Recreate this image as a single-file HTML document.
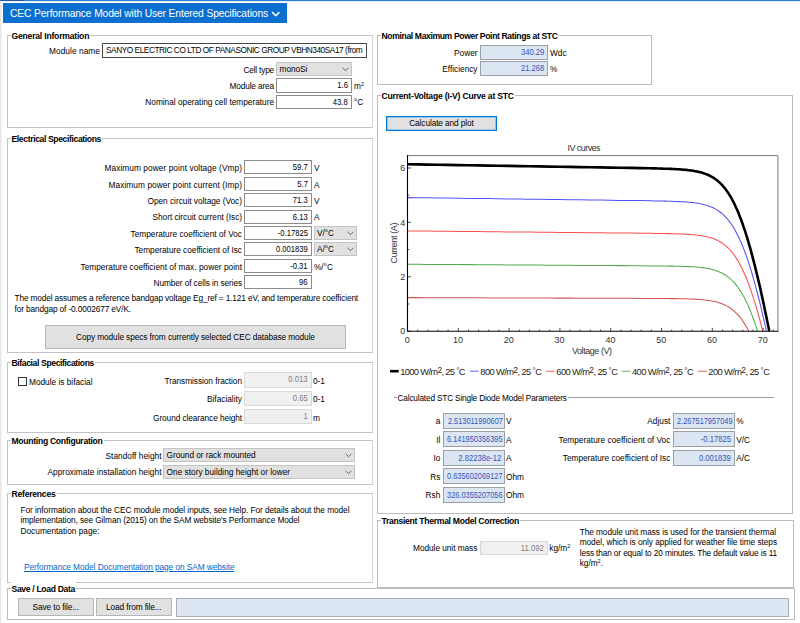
<!DOCTYPE html>
<html><head><meta charset="utf-8"><title>CEC Performance Model</title>
<style>
html,body{margin:0;padding:0;background:#fff;}
body{width:800px;height:623px;position:relative;overflow:hidden;font-family:"Liberation Sans",sans-serif;font-size:8.3px;color:#000;}
div{box-sizing:border-box}
.l{position:absolute;white-space:nowrap;line-height:14px;height:14px;font-size:8.3px;letter-spacing:-0.02px}
.r{text-align:right}
.hdr{position:absolute;left:3px;top:3px;width:284px;height:20px;background:#0a6fcf;color:#fff;font-size:10.3px;line-height:22px;padding-left:7px;white-space:nowrap;letter-spacing:-0.14px}
.gb{position:absolute;border:1px solid #c4c4c4;border-right-color:#d6d6d6;box-sizing:content-box}
.gb.dk{border-color:#bcbcbc}
.gt{position:absolute;font-weight:bold;font-size:8.6px;line-height:14px;background:#fff;padding:0 1px;white-space:nowrap;letter-spacing:-0.3px}
.in{position:absolute;border:1px solid #8c8c8c;background:#fff;text-align:right;font-size:8.6px;white-space:nowrap;overflow:hidden;padding:0 3px 0 0;letter-spacing:0}
.in>b{position:absolute;right:3px;top:0;font-weight:normal;transform:scaleX(.89);transform-origin:100% 50%}
.in.calc>b{right:3px}
.in>b.lg{right:1.2px;transform:scaleX(.86)}
.in.lft{text-align:left;padding:0 0 0 3px;font-size:8.3px;letter-spacing:0}
.in.dk{border-color:#484848}
.in.dis{background:#f0f0f0;border-color:#d9d9d9;color:#7f7f7f}
.in.calc{background:#dce6f2;border-color:#9a9fa8;color:#3355bb;padding-right:2.5px}
.sel{position:absolute;border:1px solid #c4c4c4;background:#e1e1e1;font-size:8.3px;padding-left:2.6px;white-space:nowrap;letter-spacing:-0.1px}
.sel .ch{position:absolute;right:1.8px;top:50%;margin-top:-2px}
.btn{position:absolute;border:1px solid #b6b6b6;background:#e1e1e1;text-align:center;font-size:8.3px;white-space:nowrap;letter-spacing:-0.1px}
.btn.foc{border:1px solid #0078d7;box-shadow:inset 0 0 0 1px rgba(0,120,215,.30)}
.cb{position:absolute;width:9px;height:9px;border:1px solid #333;background:#fff}
.lnk{color:#0066cc;text-decoration:underline}
.sup{font-size:5.5px;vertical-align:3px;line-height:0}
.bluebox{position:absolute;background:#dce6f2;border:1px solid #a9adb3}
.pt{font-family:"Liberation Sans",sans-serif;font-size:9px;fill:#333}
.pl{font-family:"Liberation Sans",sans-serif;font-size:9.3px;fill:#222}
</style></head>
<body>
<div style="position:absolute;left:0;top:0;width:1px;height:623px;background:#e6e6e6"></div><div style="position:absolute;left:1px;top:0;width:1px;height:623px;background:#f6f6f6"></div><div style="position:absolute;left:0;top:0;width:800px;height:1px;background:#2a80d4"></div><div style="position:absolute;left:0;top:0;width:24px;height:1px;background:#2a5a96"></div><div style="position:absolute;left:0;top:1px;width:800px;height:1px;background:#e3eefa"></div>
<div class="hdr">CEC Performance Model with User Entered Specifications<svg width="10" height="7" viewBox="0 0 10 7" style="position:absolute;left:268.3px;top:8px"><path d="M1.2 1.1 L4.8 4.7 L8.4 1.1" fill="none" stroke="#fff" stroke-width="1.5"/></svg></div>
<div class="gb" style="left:7px;top:35px;width:364px;height:91px"></div>
<div class="gt" style="left:10.5px;top:28.5px;letter-spacing:-0.208px">General Information</div>
<div class="l r " style="right:700px;top:43.6px;letter-spacing:0.065px">Module name</div>
<div class="in dk lft" style="left:102px;top:43px;width:265px;height:15px;line-height:13px"><span style="letter-spacing:-0.456px">SANYO ELECTRIC CO LTD OF PANASONIC GROUP VBHN340SA17 (from</span></div>
<div class="l r " style="right:526px;top:62.6px;letter-spacing:-0.198px">Cell type</div>
<div class="sel" style="left:276px;top:62px;width:76px;height:14px;line-height:13.6px">monoSi<svg class="ch" width="7" height="5" viewBox="0 0 7 5"><path d="M0.6 0.8 L3.5 3.7 L6.4 0.8" fill="none" stroke="#555" stroke-width="0.9"/></svg></div>
<div class="l r " style="right:526px;top:78.6px;letter-spacing:-0.148px">Module area</div>
<div class="in" style="left:276px;top:78px;width:76px;height:14.5px;line-height:12.5px"><b>1.6</b></div>
<div class="l " style="left:354px;top:78.6px">m<span class="sup">2</span></div>
<div class="l r " style="right:526px;top:95.1px;letter-spacing:-0.013px">Nominal operating cell temperature</div>
<div class="in" style="left:276px;top:95px;width:76px;height:14px;line-height:12px"><b>43.8</b></div>
<div class="l " style="left:354px;top:95.1px">°C</div>
<div class="gb" style="left:7px;top:138px;width:364px;height:213px"></div>
<div class="gt" style="left:10.5px;top:131.5px;letter-spacing:-0.375px">Electrical Specifications</div>
<div class="l r " style="right:558px;top:161.1px;letter-spacing:0.072px">Maximum power point voltage (Vmp)</div>
<div class="in" style="left:244px;top:160px;width:68px;height:14px;line-height:12px"><b>59.7</b></div>
<div class="l " style="left:314px;top:161.1px">V</div>
<div class="l r " style="right:558px;top:177.5px;letter-spacing:0.077px">Maximum power point current (Imp)</div>
<div class="in" style="left:244px;top:177px;width:68px;height:14px;line-height:12px"><b>5.7</b></div>
<div class="l " style="left:314px;top:177.5px">A</div>
<div class="l r " style="right:558px;top:193.9px;letter-spacing:-0.019px">Open circuit voltage (Voc)</div>
<div class="in" style="left:244px;top:193px;width:68px;height:14px;line-height:12px"><b>71.3</b></div>
<div class="l " style="left:314px;top:193.9px">V</div>
<div class="l r " style="right:558px;top:210.3px;letter-spacing:-0.032px">Short circuit current (Isc)</div>
<div class="in" style="left:244px;top:210px;width:68px;height:14px;line-height:12px"><b>6.13</b></div>
<div class="l " style="left:314px;top:210.3px">A</div>
<div class="l r " style="right:558px;top:226.7px;letter-spacing:0.001px">Temperature coefficient of Voc</div>
<div class="in" style="left:244px;top:226px;width:68px;height:14px;line-height:12px"><b>-0.17825</b></div>
<div class="l r " style="right:558px;top:243.1px;letter-spacing:-0.024px">Temperature coefficient of Isc</div>
<div class="in" style="left:244px;top:242px;width:68px;height:14px;line-height:12px"><b>0.001839</b></div>
<div class="l r " style="right:558px;top:259.5px;letter-spacing:0.016px">Temperature coefficient of max. power point</div>
<div class="in" style="left:244px;top:259px;width:68px;height:14px;line-height:12px"><b>-0.31</b></div>
<div class="l " style="left:314px;top:259.5px">%/°C</div>
<div class="l r " style="right:558px;top:275.9px;letter-spacing:-0.094px">Number of cells in series</div>
<div class="in" style="left:244px;top:275px;width:68px;height:14px;line-height:12px"><b>96</b></div>
<div class="sel" style="left:313.5px;top:226px;width:43.5px;height:14px;line-height:13.6px">V/°C<svg class="ch" width="7" height="5" viewBox="0 0 7 5"><path d="M0.6 0.8 L3.5 3.7 L6.4 0.8" fill="none" stroke="#555" stroke-width="0.9"/></svg></div>
<div class="sel" style="left:313.5px;top:242px;width:43.5px;height:14px;line-height:13.6px">A/°C<svg class="ch" width="7" height="5" viewBox="0 0 7 5"><path d="M0.6 0.8 L3.5 3.7 L6.4 0.8" fill="none" stroke="#555" stroke-width="0.9"/></svg></div>
<div class="l " style="left:14.5px;top:291.1px;letter-spacing:-0.139px">The model assumes a reference bandgap voltage Eg_ref = 1.121 eV, and temperature coefficient</div>
<div class="l " style="left:14.5px;top:301.6px;letter-spacing:-0.126px">for bandgap of -0.0002677 eV/K.</div>
<div class="btn " style="left:45px;top:325px;width:301px;height:24px;line-height:22px">Copy module specs from currently selected CEC database module</div>
<div class="gb" style="left:7px;top:362px;width:364px;height:69px"></div>
<div class="gt" style="left:10.5px;top:355.5px;letter-spacing:-0.380px">Bifacial Specifications</div>
<div class="cb" style="left:18px;top:377px"></div>
<div class="l " style="left:29px;top:375.1px;letter-spacing:-0.008px">Module is bifacial</div>
<div class="l r " style="right:558px;top:374px;letter-spacing:-0.050px">Transmission fraction</div>
<div class="in dis" style="left:243.5px;top:372px;width:68px;height:15.5px;line-height:13.5px"><b>0.013</b></div>
<div class="l " style="left:313px;top:374px">0-1</div>
<div class="l r " style="right:558px;top:392.4px;letter-spacing:-0.004px">Bifaciality</div>
<div class="in dis" style="left:243.5px;top:390.5px;width:68px;height:15.5px;line-height:13.5px"><b>0.65</b></div>
<div class="l " style="left:313px;top:392.4px">0-1</div>
<div class="l r " style="right:558px;top:410.8px;letter-spacing:-0.082px">Ground clearance height</div>
<div class="in dis" style="left:243.5px;top:408.5px;width:68px;height:15.5px;line-height:13.5px"><b>1</b></div>
<div class="l " style="left:313px;top:410.8px">m</div>
<div class="gb" style="left:7px;top:440px;width:364px;height:43px"></div>
<div class="gt" style="left:10.5px;top:433.5px;letter-spacing:-0.290px">Mounting Configuration</div>
<div class="l r " style="right:638.5px;top:448.9px;letter-spacing:0.022px">Standoff height</div>
<div class="sel" style="left:163px;top:448px;width:192px;height:14px;line-height:13.6px;letter-spacing:-0.043px">Ground or rack mounted<svg class="ch" width="7" height="5" viewBox="0 0 7 5"><path d="M0.6 0.8 L3.5 3.7 L6.4 0.8" fill="none" stroke="#555" stroke-width="0.9"/></svg></div>
<div class="l r " style="right:638.5px;top:465.4px;letter-spacing:0.032px">Approximate installation height</div>
<div class="sel" style="left:163px;top:464.5px;width:192px;height:14px;line-height:13.6px;letter-spacing:-0.003px">One story building height or lower<svg class="ch" width="7" height="5" viewBox="0 0 7 5"><path d="M0.6 0.8 L3.5 3.7 L6.4 0.8" fill="none" stroke="#555" stroke-width="0.9"/></svg></div>
<div class="gb" style="left:7px;top:493px;width:364px;height:88px"></div>
<div class="gt" style="left:10.5px;top:486.5px;letter-spacing:-0.234px">References</div>
<div class="l " style="left:20.5px;top:502.6px;letter-spacing:-0.056px">For information about the CEC module model inputs, see Help. For details about the model</div>
<div class="l " style="left:20.5px;top:513.1px;letter-spacing:-0.092px">implementation, see Gilman (2015) on the SAM website's Performance Model</div>
<div class="l " style="left:20.5px;top:523.6px;letter-spacing:0.007px">Documentation page:</div>
<div class="l lnk" style="left:24px;top:559.6px;letter-spacing:-0.059px">Performance Model Documentation page on SAM website</div>
<div class="gb dk" style="left:7px;top:588px;width:786px;height:29.5px"></div>
<div class="gt" style="left:10.5px;top:581.5px;letter-spacing:-0.330px">Save / Load Data</div>
<div class="btn " style="left:18px;top:598px;width:75.5px;height:18px;line-height:16px">Save to file...</div>
<div class="btn " style="left:96px;top:598px;width:75.5px;height:18px;line-height:16px">Load from file...</div>
<div class="bluebox" style="left:176px;top:597.5px;width:613px;height:19px"></div>
<div class="gb dk" style="left:377px;top:35px;width:273px;height:48px"></div>
<div class="gt" style="left:380.5px;top:28.5px;letter-spacing:-0.369px">Nominal Maximum Power Point Ratings at STC</div>
<div class="l r " style="right:322.5px;top:46.1px">Power</div>
<div class="in calc" style="left:480px;top:45px;width:68px;height:15px;line-height:13px"><b>340.29</b></div>
<div class="l " style="left:550px;top:46.1px">Wdc</div>
<div class="l r " style="right:322.5px;top:62.1px">Efficiency</div>
<div class="in calc" style="left:480px;top:61px;width:68px;height:15px;line-height:13px"><b>21.268</b></div>
<div class="l " style="left:550px;top:62.1px">%</div>
<div class="gb dk" style="left:377px;top:95px;width:414px;height:417px"></div>
<div class="gt" style="left:380.5px;top:88.5px;letter-spacing:-0.221px">Current-Voltage (I-V) Curve at STC</div>
<div class="btn foc" style="left:386px;top:116px;width:111px;height:14.5px;line-height:12.5px">Calculate and plot</div>
<svg style="position:absolute;left:0;top:0" width="800" height="623" viewBox="0 0 800 623">
<text x="584" y="151.3" class="pt" text-anchor="middle" textLength="33">IV curves</text>
<clipPath id="cp"><rect x="407" y="155" width="371" height="176.5"/></clipPath>
<g clip-path="url(#cp)"><path d="M407.0 297.6 L417.2 297.6 L427.3 297.7 L437.5 297.7 L447.6 297.7 L457.8 297.8 L468.0 297.8 L478.1 297.8 L488.3 297.9 L498.4 297.9 L508.6 297.9 L518.8 298.0 L528.9 298.0 L539.1 298.0 L549.2 298.1 L559.4 298.1 L569.6 298.1 L579.7 298.2 L589.9 298.2 L600.0 298.2 L610.2 298.3 L620.4 298.3 L630.5 298.3 L640.7 298.4 L650.8 298.4 L652.1 298.4 L653.4 298.4 L654.6 298.4 L655.9 298.4 L657.2 298.5 L658.5 298.5 L659.7 298.5 L661.0 298.5 L662.3 298.5 L663.5 298.5 L664.8 298.5 L666.1 298.5 L667.4 298.5 L668.6 298.5 L669.9 298.6 L671.2 298.6 L672.4 298.6 L673.7 298.6 L675.0 298.6 L676.2 298.6 L677.5 298.7 L678.8 298.7 L680.0 298.7 L681.3 298.7 L682.6 298.8 L683.9 298.8 L685.1 298.8 L686.4 298.8 L687.7 298.9 L688.9 298.9 L690.2 299.0 L691.5 299.0 L692.8 299.1 L694.0 299.1 L695.3 299.2 L696.6 299.3 L697.8 299.4 L699.1 299.5 L700.4 299.5 L701.6 299.7 L702.9 299.8 L704.2 299.9 L705.5 300.0 L706.7 300.2 L708.0 300.4 L709.3 300.5 L710.5 300.8 L711.8 301.0 L713.1 301.2 L714.3 301.5 L715.6 301.8 L716.9 302.1 L718.1 302.5 L719.4 302.9 L720.7 303.3 L722.0 303.8 L723.2 304.3 L724.5 304.8 L725.8 305.4 L727.0 306.1 L728.3 306.8 L729.6 307.6 L730.9 308.5 L732.1 309.4 L733.4 310.5 L734.7 311.6 L735.9 312.8 L737.2 314.1 L738.5 315.4 L739.7 316.9 L741.0 318.6 L742.3 320.3 L743.5 322.1 L744.8 324.1 L746.1 326.2 L747.4 328.5 L748.6 330.9 L748.7 331.0" fill="none" stroke="#cf5555" stroke-width="1.05" stroke-linejoin="round"/>
<path d="M407.0 264.2 L417.2 264.3 L427.3 264.4 L437.5 264.4 L447.6 264.5 L457.8 264.6 L468.0 264.6 L478.1 264.7 L488.3 264.8 L498.4 264.8 L508.6 264.9 L518.8 265.0 L528.9 265.0 L539.1 265.1 L549.2 265.2 L559.4 265.2 L569.6 265.3 L579.7 265.4 L589.9 265.4 L600.0 265.5 L610.2 265.6 L620.4 265.6 L630.5 265.7 L640.7 265.8 L650.8 265.9 L652.1 265.9 L653.4 265.9 L654.6 265.9 L655.9 265.9 L657.2 265.9 L658.5 265.9 L659.7 265.9 L661.0 266.0 L662.3 266.0 L663.5 266.0 L664.8 266.0 L666.1 266.0 L667.4 266.0 L668.6 266.1 L669.9 266.1 L671.2 266.1 L672.4 266.1 L673.7 266.1 L675.0 266.2 L676.2 266.2 L677.5 266.2 L678.8 266.3 L680.0 266.3 L681.3 266.3 L682.6 266.4 L683.9 266.4 L685.1 266.5 L686.4 266.5 L687.7 266.6 L688.9 266.6 L690.2 266.7 L691.5 266.8 L692.8 266.8 L694.0 266.9 L695.3 267.0 L696.6 267.1 L697.8 267.2 L699.1 267.3 L700.4 267.5 L701.6 267.6 L702.9 267.8 L704.2 268.0 L705.5 268.1 L706.7 268.4 L708.0 268.6 L709.3 268.8 L710.5 269.1 L711.8 269.4 L713.1 269.7 L714.3 270.1 L715.6 270.5 L716.9 270.9 L718.1 271.4 L719.4 271.9 L720.7 272.5 L722.0 273.1 L723.2 273.8 L724.5 274.5 L725.8 275.3 L727.0 276.2 L728.3 277.1 L729.6 278.2 L730.9 279.3 L732.1 280.5 L733.4 281.8 L734.7 283.2 L735.9 284.7 L737.2 286.3 L738.5 288.0 L739.7 289.9 L741.0 291.9 L742.3 294.0 L743.5 296.2 L744.8 298.6 L746.1 301.2 L747.4 303.9 L748.6 306.7 L749.9 309.7 L751.2 312.9 L752.4 316.2 L753.7 319.7 L755.0 323.3 L756.2 327.1 L757.5 331.0 L757.5 331.0" fill="none" stroke="#50aa50" stroke-width="1.05" stroke-linejoin="round"/>
<path d="M407.0 230.9 L417.2 231.0 L427.3 231.1 L437.5 231.2 L447.6 231.3 L457.8 231.4 L468.0 231.5 L478.1 231.6 L488.3 231.7 L498.4 231.8 L508.6 231.9 L518.8 232.0 L528.9 232.1 L539.1 232.2 L549.2 232.3 L559.4 232.4 L569.6 232.5 L579.7 232.6 L589.9 232.7 L600.0 232.8 L610.2 232.9 L620.4 233.0 L630.5 233.1 L640.7 233.2 L650.8 233.3 L652.1 233.3 L653.4 233.4 L654.6 233.4 L655.9 233.4 L657.2 233.4 L658.5 233.4 L659.7 233.4 L661.0 233.5 L662.3 233.5 L663.5 233.5 L664.8 233.5 L666.1 233.6 L667.4 233.6 L668.6 233.6 L669.9 233.6 L671.2 233.7 L672.4 233.7 L673.7 233.7 L675.0 233.8 L676.2 233.8 L677.5 233.8 L678.8 233.9 L680.0 233.9 L681.3 234.0 L682.6 234.0 L683.9 234.1 L685.1 234.2 L686.4 234.2 L687.7 234.3 L688.9 234.4 L690.2 234.5 L691.5 234.6 L692.8 234.7 L694.0 234.8 L695.3 234.9 L696.6 235.1 L697.8 235.2 L699.1 235.4 L700.4 235.5 L701.6 235.7 L702.9 236.0 L704.2 236.2 L705.5 236.4 L706.7 236.7 L708.0 237.0 L709.3 237.4 L710.5 237.7 L711.8 238.1 L713.1 238.6 L714.3 239.1 L715.6 239.6 L716.9 240.1 L718.1 240.8 L719.4 241.4 L720.7 242.2 L722.0 243.0 L723.2 243.9 L724.5 244.8 L725.8 245.8 L727.0 247.0 L728.3 248.2 L729.6 249.5 L730.9 250.9 L732.1 252.4 L733.4 254.0 L734.7 255.7 L735.9 257.6 L737.2 259.6 L738.5 261.7 L739.7 264.0 L741.0 266.4 L742.3 269.0 L743.5 271.7 L744.8 274.5 L746.1 277.5 L747.4 280.7 L748.6 284.0 L749.9 287.4 L751.2 291.1 L752.4 294.9 L753.7 298.8 L755.0 302.9 L756.2 307.1 L757.5 311.5 L758.8 316.1 L760.1 320.8 L761.3 325.6 L762.6 330.6 L762.7 331.0" fill="none" stroke="#ff4e4e" stroke-width="1.05" stroke-linejoin="round"/>
<path d="M407.0 197.6 L417.2 197.7 L427.3 197.8 L437.5 198.0 L447.6 198.1 L457.8 198.2 L468.0 198.4 L478.1 198.5 L488.3 198.6 L498.4 198.8 L508.6 198.9 L518.8 199.0 L528.9 199.2 L539.1 199.3 L549.2 199.4 L559.4 199.6 L569.6 199.7 L579.7 199.8 L589.9 200.0 L600.0 200.1 L610.2 200.2 L620.4 200.4 L630.5 200.5 L640.7 200.6 L650.8 200.8 L652.1 200.8 L653.4 200.9 L654.6 200.9 L655.9 200.9 L657.2 200.9 L658.5 200.9 L659.7 201.0 L661.0 201.0 L662.3 201.0 L663.5 201.1 L664.8 201.1 L666.1 201.1 L667.4 201.2 L668.6 201.2 L669.9 201.2 L671.2 201.3 L672.4 201.3 L673.7 201.4 L675.0 201.4 L676.2 201.5 L677.5 201.5 L678.8 201.6 L680.0 201.6 L681.3 201.7 L682.6 201.8 L683.9 201.9 L685.1 201.9 L686.4 202.0 L687.7 202.1 L688.9 202.2 L690.2 202.4 L691.5 202.5 L692.8 202.6 L694.0 202.8 L695.3 203.0 L696.6 203.1 L697.8 203.3 L699.1 203.6 L700.4 203.8 L701.6 204.1 L702.9 204.3 L704.2 204.7 L705.5 205.0 L706.7 205.4 L708.0 205.8 L709.3 206.2 L710.5 206.7 L711.8 207.2 L713.1 207.8 L714.3 208.4 L715.6 209.1 L716.9 209.9 L718.1 210.7 L719.4 211.5 L720.7 212.5 L722.0 213.5 L723.2 214.7 L724.5 215.9 L725.8 217.2 L727.0 218.6 L728.3 220.1 L729.6 221.7 L730.9 223.5 L732.1 225.3 L733.4 227.3 L734.7 229.5 L735.9 231.7 L737.2 234.2 L738.5 236.7 L739.7 239.4 L741.0 242.3 L742.3 245.3 L743.5 248.4 L744.8 251.8 L746.1 255.2 L747.4 258.9 L748.6 262.7 L749.9 266.6 L751.2 270.7 L752.4 275.0 L753.7 279.4 L755.0 283.9 L756.2 288.6 L757.5 293.5 L758.8 298.5 L760.1 303.6 L761.3 308.9 L762.6 314.3 L763.9 319.8 L765.1 325.5 L766.4 331.0" fill="none" stroke="#5050ff" stroke-width="1.05" stroke-linejoin="round"/>
<path d="M407.0 164.3 L417.2 164.4 L427.3 164.6 L437.5 164.8 L447.6 164.9 L457.8 165.1 L468.0 165.3 L478.1 165.4 L488.3 165.6 L498.4 165.8 L508.6 165.9 L518.8 166.1 L528.9 166.3 L539.1 166.4 L549.2 166.6 L559.4 166.8 L569.6 166.9 L579.7 167.1 L589.9 167.3 L600.0 167.4 L610.2 167.6 L620.4 167.8 L630.5 167.9 L640.7 168.1 L650.8 168.3 L652.1 168.4 L653.4 168.4 L654.6 168.4 L655.9 168.4 L657.2 168.5 L658.5 168.5 L659.7 168.5 L661.0 168.6 L662.3 168.6 L663.5 168.7 L664.8 168.7 L666.1 168.7 L667.4 168.8 L668.6 168.8 L669.9 168.9 L671.2 168.9 L672.4 169.0 L673.7 169.0 L675.0 169.1 L676.2 169.2 L677.5 169.2 L678.8 169.3 L680.0 169.4 L681.3 169.5 L682.6 169.6 L683.9 169.7 L685.1 169.8 L686.4 169.9 L687.7 170.1 L688.9 170.2 L690.2 170.4 L691.5 170.5 L692.8 170.7 L694.0 170.9 L695.3 171.2 L696.6 171.4 L697.8 171.7 L699.1 172.0 L700.4 172.3 L701.6 172.6 L702.9 173.0 L704.2 173.4 L705.5 173.9 L706.7 174.3 L708.0 174.9 L709.3 175.5 L710.5 176.1 L711.8 176.8 L713.1 177.5 L714.3 178.3 L715.6 179.2 L716.9 180.2 L718.1 181.2 L719.4 182.4 L720.7 183.6 L722.0 184.9 L723.2 186.3 L724.5 187.8 L725.8 189.5 L727.0 191.2 L728.3 193.1 L729.6 195.1 L730.9 197.2 L732.1 199.5 L733.4 201.9 L734.7 204.5 L735.9 207.2 L737.2 210.0 L738.5 213.1 L739.7 216.2 L741.0 219.5 L742.3 223.0 L743.5 226.7 L744.8 230.4 L746.1 234.4 L747.4 238.5 L748.6 242.8 L749.9 247.2 L751.2 251.7 L752.4 256.4 L753.7 261.3 L755.0 266.3 L756.2 271.4 L757.5 276.7 L758.8 282.1 L760.1 287.6 L761.3 293.3 L762.6 299.1 L763.9 305.0 L765.1 311.0 L766.4 317.1 L767.7 323.4 L769.0 329.7 L769.2 331.0" fill="none" stroke="#000000" stroke-width="2.6" stroke-linejoin="round"/></g>
<path d="M407.5 155.6 H777.9 V331.5" fill="none" stroke="#555" stroke-width="0.8"/>
<path d="M407.5 155 V331.2 H778.3" fill="none" stroke="#000" stroke-width="1.1"/>
<line x1="407.5" y1="331" x2="407.5" y2="327.8" stroke="#000" stroke-width="0.7"/>
<text x="407.2" y="342.7" class="pt" text-anchor="middle">0</text>
<line x1="417.7" y1="331" x2="417.7" y2="329.6" stroke="#000" stroke-width="0.7"/>
<line x1="427.8" y1="331" x2="427.8" y2="329.6" stroke="#000" stroke-width="0.7"/>
<line x1="438.0" y1="331" x2="438.0" y2="329.6" stroke="#000" stroke-width="0.7"/>
<line x1="448.1" y1="331" x2="448.1" y2="329.6" stroke="#000" stroke-width="0.7"/>
<line x1="458.3" y1="331" x2="458.3" y2="327.8" stroke="#000" stroke-width="0.7"/>
<text x="458.0" y="342.7" class="pt" text-anchor="middle">10</text>
<line x1="468.5" y1="331" x2="468.5" y2="329.6" stroke="#000" stroke-width="0.7"/>
<line x1="478.6" y1="331" x2="478.6" y2="329.6" stroke="#000" stroke-width="0.7"/>
<line x1="488.8" y1="331" x2="488.8" y2="329.6" stroke="#000" stroke-width="0.7"/>
<line x1="498.9" y1="331" x2="498.9" y2="329.6" stroke="#000" stroke-width="0.7"/>
<line x1="509.1" y1="331" x2="509.1" y2="327.8" stroke="#000" stroke-width="0.7"/>
<text x="508.8" y="342.7" class="pt" text-anchor="middle">20</text>
<line x1="519.3" y1="331" x2="519.3" y2="329.6" stroke="#000" stroke-width="0.7"/>
<line x1="529.4" y1="331" x2="529.4" y2="329.6" stroke="#000" stroke-width="0.7"/>
<line x1="539.6" y1="331" x2="539.6" y2="329.6" stroke="#000" stroke-width="0.7"/>
<line x1="549.7" y1="331" x2="549.7" y2="329.6" stroke="#000" stroke-width="0.7"/>
<line x1="559.9" y1="331" x2="559.9" y2="327.8" stroke="#000" stroke-width="0.7"/>
<text x="559.6" y="342.7" class="pt" text-anchor="middle">30</text>
<line x1="570.1" y1="331" x2="570.1" y2="329.6" stroke="#000" stroke-width="0.7"/>
<line x1="580.2" y1="331" x2="580.2" y2="329.6" stroke="#000" stroke-width="0.7"/>
<line x1="590.4" y1="331" x2="590.4" y2="329.6" stroke="#000" stroke-width="0.7"/>
<line x1="600.5" y1="331" x2="600.5" y2="329.6" stroke="#000" stroke-width="0.7"/>
<line x1="610.7" y1="331" x2="610.7" y2="327.8" stroke="#000" stroke-width="0.7"/>
<text x="610.4" y="342.7" class="pt" text-anchor="middle">40</text>
<line x1="620.9" y1="331" x2="620.9" y2="329.6" stroke="#000" stroke-width="0.7"/>
<line x1="631.0" y1="331" x2="631.0" y2="329.6" stroke="#000" stroke-width="0.7"/>
<line x1="641.2" y1="331" x2="641.2" y2="329.6" stroke="#000" stroke-width="0.7"/>
<line x1="651.3" y1="331" x2="651.3" y2="329.6" stroke="#000" stroke-width="0.7"/>
<line x1="661.5" y1="331" x2="661.5" y2="327.8" stroke="#000" stroke-width="0.7"/>
<text x="661.2" y="342.7" class="pt" text-anchor="middle">50</text>
<line x1="671.7" y1="331" x2="671.7" y2="329.6" stroke="#000" stroke-width="0.7"/>
<line x1="681.8" y1="331" x2="681.8" y2="329.6" stroke="#000" stroke-width="0.7"/>
<line x1="692.0" y1="331" x2="692.0" y2="329.6" stroke="#000" stroke-width="0.7"/>
<line x1="702.1" y1="331" x2="702.1" y2="329.6" stroke="#000" stroke-width="0.7"/>
<line x1="712.3" y1="331" x2="712.3" y2="327.8" stroke="#000" stroke-width="0.7"/>
<text x="712.0" y="342.7" class="pt" text-anchor="middle">60</text>
<line x1="722.5" y1="331" x2="722.5" y2="329.6" stroke="#000" stroke-width="0.7"/>
<line x1="732.6" y1="331" x2="732.6" y2="329.6" stroke="#000" stroke-width="0.7"/>
<line x1="742.8" y1="331" x2="742.8" y2="329.6" stroke="#000" stroke-width="0.7"/>
<line x1="752.9" y1="331" x2="752.9" y2="329.6" stroke="#000" stroke-width="0.7"/>
<line x1="763.1" y1="331" x2="763.1" y2="327.8" stroke="#000" stroke-width="0.7"/>
<text x="762.8" y="342.7" class="pt" text-anchor="middle">70</text>
<line x1="773.3" y1="331" x2="773.3" y2="329.6" stroke="#000" stroke-width="0.7"/>
<line x1="407.5" y1="331.2" x2="411.0" y2="331.2" stroke="#000" stroke-width="0.7"/>
<text x="405.3" y="334.4" class="pt" text-anchor="end">0</text>
<line x1="407.5" y1="304.0" x2="409.3" y2="304.0" stroke="#000" stroke-width="0.7"/>
<line x1="407.5" y1="276.8" x2="411.0" y2="276.8" stroke="#000" stroke-width="0.7"/>
<text x="405.3" y="280.0" class="pt" text-anchor="end">2</text>
<line x1="407.5" y1="249.6" x2="409.3" y2="249.6" stroke="#000" stroke-width="0.7"/>
<line x1="407.5" y1="222.4" x2="411.0" y2="222.4" stroke="#000" stroke-width="0.7"/>
<text x="405.3" y="225.6" class="pt" text-anchor="end">4</text>
<line x1="407.5" y1="195.2" x2="409.3" y2="195.2" stroke="#000" stroke-width="0.7"/>
<line x1="407.5" y1="168.0" x2="411.0" y2="168.0" stroke="#000" stroke-width="0.7"/>
<text x="405.3" y="171.2" class="pt" text-anchor="end">6</text>
<text x="592" y="354.2" class="pt" text-anchor="middle" textLength="40">Voltage (V)</text>
<text transform="translate(397.3,243) rotate(-90)" class="pt" text-anchor="middle" textLength="41">Current (A)</text>
<line x1="390" y1="371.2" x2="398.7" y2="371.2" stroke="#000000" stroke-width="2.6"/>
<text x="400.3" y="375" class="pl" textLength="65.2">1000 W/m<tspan dy="-2.2" font-size="8.4">2</tspan><tspan dy="2.2">, 25 </tspan><tspan dy="-1.6" font-size="8">°</tspan><tspan dy="1.6">C</tspan></text>
<line x1="470" y1="371.2" x2="478.7" y2="371.2" stroke="#5050ff" stroke-width="0.9"/>
<text x="480.3" y="375" class="pl" textLength="61.6">800 W/m<tspan dy="-2.2" font-size="8.4">2</tspan><tspan dy="2.2">, 25 </tspan><tspan dy="-1.6" font-size="8">°</tspan><tspan dy="1.6">C</tspan></text>
<line x1="546" y1="371.2" x2="554.7" y2="371.2" stroke="#ff4e4e" stroke-width="0.9"/>
<text x="556.3" y="375" class="pl" textLength="61.6">600 W/m<tspan dy="-2.2" font-size="8.4">2</tspan><tspan dy="2.2">, 25 </tspan><tspan dy="-1.6" font-size="8">°</tspan><tspan dy="1.6">C</tspan></text>
<line x1="621.7" y1="371.2" x2="630.4" y2="371.2" stroke="#50aa50" stroke-width="0.9"/>
<text x="632" y="375" class="pl" textLength="61.6">400 W/m<tspan dy="-2.2" font-size="8.4">2</tspan><tspan dy="2.2">, 25 </tspan><tspan dy="-1.6" font-size="8">°</tspan><tspan dy="1.6">C</tspan></text>
<line x1="698" y1="371.2" x2="706.7" y2="371.2" stroke="#cf5555" stroke-width="0.9"/>
<text x="708.3" y="375" class="pl" textLength="61.6">200 W/m<tspan dy="-2.2" font-size="8.4">2</tspan><tspan dy="2.2">, 25 </tspan><tspan dy="-1.6" font-size="8">°</tspan><tspan dy="1.6">C</tspan></text>
</svg>
<div style="position:absolute;left:393.5px;top:397px;width:380px;height:1px;background:#a0a0a0"></div>
<div class="l" style="left:396.5px;top:390.5px;background:#fff;padding:0 1px;letter-spacing:-0.187px">Calculated STC Single Diode Model Parameters</div>
<div class="l r " style="right:359.7px;top:414.4px">a</div>
<div class="in calc" style="left:443px;top:413px;width:62px;height:16px;line-height:14px"><b class="lg">2.513011990607</b></div>
<div class="l " style="left:506px;top:414.4px">V</div>
<div class="l r " style="right:359.7px;top:432.9px">Il</div>
<div class="in calc" style="left:443px;top:431px;width:62px;height:16px;line-height:14px"><b class="lg">6.141950356395</b></div>
<div class="l " style="left:506px;top:432.9px">A</div>
<div class="l r " style="right:359.7px;top:451.4px">Io</div>
<div class="in calc" style="left:443px;top:450px;width:62px;height:16px;line-height:14px"><b>2.82238e-12</b></div>
<div class="l " style="left:506px;top:451.4px">A</div>
<div class="l r " style="right:359.7px;top:469.9px">Rs</div>
<div class="in calc" style="left:443px;top:468px;width:62px;height:16px;line-height:14px"><b class="lg">0.635602069127</b></div>
<div class="l " style="left:506px;top:469.9px">Ohm</div>
<div class="l r " style="right:359.7px;top:488.4px">Rsh</div>
<div class="in calc" style="left:443px;top:487px;width:62px;height:16px;line-height:14px"><b class="lg">326.0355207056</b></div>
<div class="l " style="left:506px;top:488.4px">Ohm</div>
<div class="l r " style="right:129.7px;top:414.4px;letter-spacing:-0.010px">Adjust</div>
<div class="in calc" style="left:673px;top:413px;width:62px;height:16px;line-height:14px"><b class="lg">2.267517957049</b></div>
<div class="l " style="left:736.3px;top:414.4px">%</div>
<div class="l r " style="right:129.7px;top:432.9px;letter-spacing:0.011px">Temperature coefficient of Voc</div>
<div class="in calc" style="left:673px;top:431px;width:62px;height:16px;line-height:14px"><b>-0.17825</b></div>
<div class="l " style="left:736.3px;top:432.9px">V/C</div>
<div class="l r " style="right:129.7px;top:451.4px;letter-spacing:-0.024px">Temperature coefficient of Isc</div>
<div class="in calc" style="left:673px;top:450px;width:62px;height:16px;line-height:14px"><b>0.001839</b></div>
<div class="l " style="left:736.3px;top:451.4px">A/C</div>
<div class="gb dk" style="left:377px;top:520px;width:415px;height:66px"></div>
<div class="gt" style="left:380.5px;top:513.5px;letter-spacing:-0.282px">Transient Thermal Model Correction</div>
<div class="l r " style="right:322.7px;top:541.2px;letter-spacing:-0.046px">Module unit mass</div>
<div class="in dis" style="left:480px;top:540.5px;width:68px;height:14px;line-height:12px"><b>11.092</b></div>
<div class="l " style="left:549.3px;top:541.2px">kg/m<span class="sup">2</span></div>
<div class="l " style="left:579.7px;top:524.8px;letter-spacing:-0.071px">The module unit mass is used for the transient thermal</div>
<div class="l " style="left:579.7px;top:535.2px;letter-spacing:-0.051px">model, which is only applied for weather file time steps</div>
<div class="l " style="left:579.7px;top:545.6px;letter-spacing:-0.134px">less than or equal to 20 minutes. The default value is 11</div>
<div class="l " style="left:579.7px;top:555.9px">kg/m<span class="sup">2</span>.</div>
</body></html>
